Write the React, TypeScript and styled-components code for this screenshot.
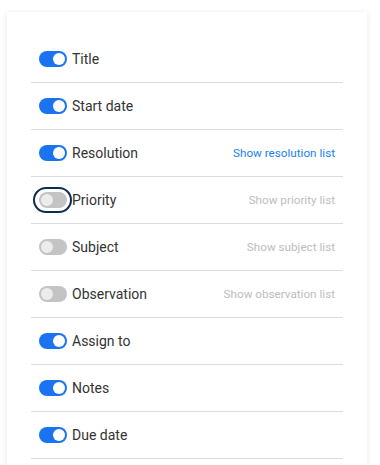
import React, { useState } from "react";
import styled, { createGlobalStyle } from "styled-components";

const GlobalStyle = createGlobalStyle`
  html, body {
    margin: 0;
    padding: 0;
    background: #ffffff;
    font-family: Roboto, "Liberation Sans", sans-serif;
  }
`;

const Page = styled.div`
  padding: 12px 13px 0 7px;
`;

const Card = styled.div`
  background: #fff;
  box-shadow: 0 1px 6px rgba(0, 0, 0, 0.1);
  padding: 24px 24px 8px 24px;
`;

const Row = styled.div`
  height: 46px;
  display: flex;
  align-items: center;
  border-bottom: 1px solid #dcdcdc;
  padding: 0 8px;
`;

const ToggleWrap = styled.button<{ focused: boolean }>`
  display: flex;
  align-items: center;
  justify-content: center;
  width: 39px;
  height: 26px;
  margin: 0 -5px 0 -6px;
  padding: 0;
  background: none;
  border: 2px solid ${({ focused }) => (focused ? "#0e2c50" : "transparent")};
  border-radius: 13px;
  cursor: pointer;
  box-sizing: border-box;
`;

const Track = styled.span<{ on: boolean }>`
  position: relative;
  width: 28px;
  height: 16px;
  border-radius: 8px;
  background: ${({ on }) => (on ? "#1a73f0" : "#c4c4c4")};
  display: block;
`;

const Knob = styled.span<{ on: boolean }>`
  position: absolute;
  top: 2px;
  left: ${({ on }) => (on ? "14px" : "2px")};
  width: 12px;
  height: 12px;
  border-radius: 50%;
  background: ${({ on }) => (on ? "#ffffff" : "#ececec")};
`;

const Label = styled.span`
  margin-left: 5px;
  font-size: 14px;
  color: #333;
  flex: 1;
`;

const Link = styled.a<{ active: boolean }>`
  font-size: 11.7px;
  color: ${({ active }) => (active ? "#1a7ff5" : "#bdbdbd")};
  text-decoration: none;
  cursor: pointer;
`;

type Item = { label: string; on: boolean; link?: string };

const initial: Item[] = [
  { label: "Title", on: true },
  { label: "Start date", on: true },
  { label: "Resolution", on: true, link: "Show resolution list" },
  { label: "Priority", on: false, link: "Show priority list" },
  { label: "Subject", on: false, link: "Show subject list" },
  { label: "Observation", on: false, link: "Show observation list" },
  { label: "Assign to", on: true },
  { label: "Notes", on: true },
  { label: "Due date", on: true },
];

const App = () => {
  const [items, setItems] = useState(initial);

  const toggle = (i: number) => {
    setItems((prev) => prev.map((it, j) => (j === i ? { ...it, on: !it.on } : it)));
  };

  return (
    <>
      <GlobalStyle />
      <Page>
        <Card>
          {items.map((it, i) => (
            <Row key={it.label}>
              <ToggleWrap focused={it.label === "Priority"} onClick={() => toggle(i)}>
                <Track on={it.on}>
                  <Knob on={it.on} />
                </Track>
              </ToggleWrap>
              <Label>{it.label}</Label>
              {it.link && <Link active={it.on}>{it.link}</Link>}
            </Row>
          ))}
        </Card>
      </Page>
    </>
  );
};

export default App;
